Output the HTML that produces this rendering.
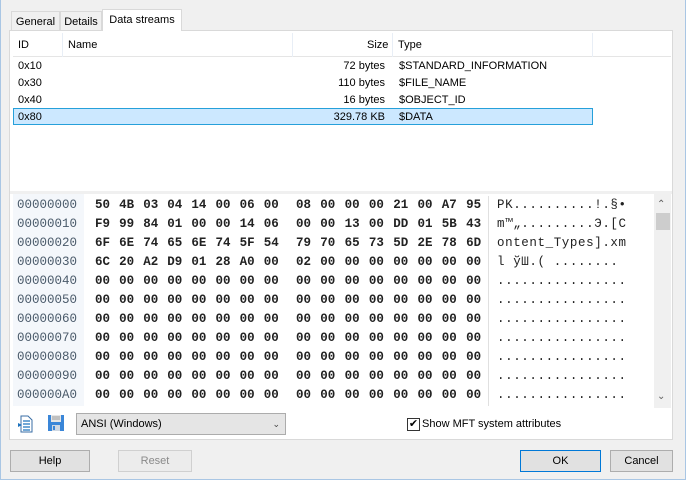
<!DOCTYPE html>
<html><head><meta charset="utf-8"><style>
*{box-sizing:border-box;margin:0;padding:0}
body{width:686px;height:480px;background:#f0f0f0;position:relative;overflow:hidden;font-family:"Liberation Sans",sans-serif;font-size:11px;color:#000}
.a{position:absolute}
.tab{position:absolute;border:1px solid #d9d9d9;border-bottom:none;background:#f0f0f0;font-size:11px;padding-top:4px;text-align:center}
.row{position:absolute;left:13px;width:580px;height:17px;line-height:17px}
.row span{position:absolute}
.hx{position:absolute;left:13px;height:19px;line-height:19px;font-family:"Liberation Mono",monospace;font-size:12.5px;white-space:pre}
.off{position:absolute;left:4px;color:#4a5a6a;font-weight:normal}
.b{position:absolute;font-weight:bold;color:#222}
.btn{position:absolute;height:22px;border:1px solid #adadad;background:#e1e1e1;text-align:center;line-height:20px;font-size:11px}
</style></head><body>
<div class="a" style="left:0;top:0;width:1px;height:480px;background:#a9c6e4"></div>
<div class="a" style="right:0;top:0;width:1px;height:480px;background:#a9c6e4"></div>
<div class="a" style="left:0;bottom:0;width:686px;height:1px;background:#a9c6e4"></div>
<div class="a" style="left:9px;top:30px;width:664px;height:410px;background:#fff;border:1px solid #d9d9d9"></div>
<div class="tab" style="left:11px;top:11px;width:49px;height:19px">General</div>
<div class="tab" style="left:60px;top:11px;width:42px;height:19px">Details</div>
<div class="tab" style="left:102px;top:9px;width:80px;height:22px;background:#fff;border-color:#d9d9d9">Data streams</div>
<div class="a" style="left:13px;top:33px;width:658px;height:24px;border-bottom:1px solid #e5e5e5"></div>
<div class="a" style="left:62px;top:33px;width:1px;height:24px;background:#e8eef6"></div>
<div class="a" style="left:292px;top:33px;width:1px;height:24px;background:#e8eef6"></div>
<div class="a" style="left:392px;top:33px;width:1px;height:24px;background:#e8eef6"></div>
<div class="a" style="left:592px;top:33px;width:1px;height:24px;background:#e8eef6"></div>
<div class="a" style="left:18px;top:39px">ID</div>
<div class="a" style="left:68px;top:39px">Name</div>
<div class="a" style="left:367px;top:39px">Size</div>
<div class="a" style="left:398px;top:39px">Type</div>
<div class="row" style="top:58px"><span style="left:5px">0x10</span><span style="right:208px">72 bytes</span><span style="left:386px">$STANDARD_INFORMATION</span></div>
<div class="row" style="top:75px"><span style="left:5px">0x30</span><span style="right:208px">110 bytes</span><span style="left:386px">$FILE_NAME</span></div>
<div class="row" style="top:92px"><span style="left:5px">0x40</span><span style="right:208px">16 bytes</span><span style="left:386px">$OBJECT_ID</span></div>
<div class="row" style="top:108px;background:#cce8ff;border:1px solid #26a0da;line-height:17px"><span style="left:4px">0x80</span><span style="right:207px">329.78 KB</span><span style="left:385px">$DATA</span></div>
<div class="a" style="left:10px;top:191px;width:662px;height:3px;background:#f0f0f0"></div>
<div class="a" style="left:13px;top:194px;width:71px;height:212px;background:#f4f7fb"></div>
<div class="a" style="left:488px;top:196px;width:1px;height:210px;background:#e0e0e0"></div>
<div class="a" style="left:654px;top:194px;width:17px;height:214px;background:#f0f0f0"></div>
<div class="a" style="left:656px;top:213px;width:14px;height:17px;background:#cdcdcd"></div>
<div class="a" style="left:657px;top:199px;font-size:10px;color:#606060">&#8963;</div>
<div class="a" style="left:657px;top:391px;font-size:10px;color:#606060">&#8964;</div>
<div id="hex"></div>
<script>
var rows=[["00000000","50 4B 03 04 14 00 06 00","08 00 00 00 21 00 A7 95","PK..........!.§•"],
["00000010","F9 99 84 01 00 00 14 06","00 00 13 00 DD 01 5B 43","m™„.........Э.[C"],
["00000020","6F 6E 74 65 6E 74 5F 54","79 70 65 73 5D 2E 78 6D","ontent_Types].xm"],
["00000030","6C 20 A2 D9 01 28 A0 00","02 00 00 00 00 00 00 00","l ўШ.( ........"]];
var z="00 00 00 00 00 00 00 00",d="................";
var o=["00000040","00000050","00000060","00000070","00000080","00000090","000000A0"];
o.forEach(function(x){rows.push([x,z,z,d])});
var h="";
rows.forEach(function(r,i){
 var t=196+i*19;
 h+='<div class="hx" style="top:'+t+'px;width:640px"><span class="off">'+r[0]+'</span>';
 var g1=r[1].split(" "),g2=r[2].split(" ");
 g1.forEach(function(b,j){h+='<span class="b" style="left:'+(82+j*24.1)+'px">'+b+'</span>'});
 g2.forEach(function(b,j){h+='<span class="b" style="left:'+(283+j*24.3)+'px">'+b+'</span>'});
 h+='<span class="b" style="left:484px;font-weight:normal;letter-spacing:0.6px">'+r[3]+'</span></div>';
});
document.getElementById("hex").innerHTML=h;
</script>
<svg class="a" style="left:16px;top:414px" width="20" height="20" viewBox="0 0 20 20"><path d="M5 2h7l4 4v12H5z" fill="#fff" stroke="#3a6ea5"/><path d="M7 7h7M7 10h7M7 13h7M7 16h7" stroke="#1e73be" stroke-width="1.2"/><path d="M2 9l4 2-4 2z" fill="#1e73be"/></svg>
<svg class="a" style="left:47px;top:414px" width="18" height="18" viewBox="0 0 18 18"><rect x="1" y="1" width="16" height="16" fill="#3a86d8"/><rect x="4" y="1" width="10" height="7" fill="#e6e6e6"/><path d="M5 3h8M5 5h8" stroke="#999"/><rect x="5" y="11" width="8" height="6" fill="#cfd8e3"/><rect x="6" y="12" width="2" height="4" fill="#3a86d8"/></svg>
<div class="a" style="left:76px;top:413px;width:210px;height:22px;border:1px solid #acacac;background:#e5e5e5;line-height:20px;padding-left:4px;font-size:11px">ANSI (Windows)<span style="position:absolute;right:5px;top:0;font-size:9px;color:#444">&#8964;</span></div>
<div class="a" style="left:407px;top:418px;width:13px;height:13px;border:1px solid #333;background:#fff;font-size:11px;line-height:11px;text-align:center">&#10004;</div>
<div class="a" style="left:422px;top:418px;font-size:11px">Show MFT system attributes</div>
<div class="btn" style="left:10px;top:450px;width:80px">Help</div>
<div class="btn" style="left:118px;top:450px;width:74px;border-color:#d0d0d0;background:#ececec;color:#8a8a8a">Reset</div>
<div class="btn" style="left:520px;top:450px;width:81px;border-color:#0078d7">OK</div>
<div class="btn" style="left:610px;top:450px;width:63px">Cancel</div>
</body></html>
